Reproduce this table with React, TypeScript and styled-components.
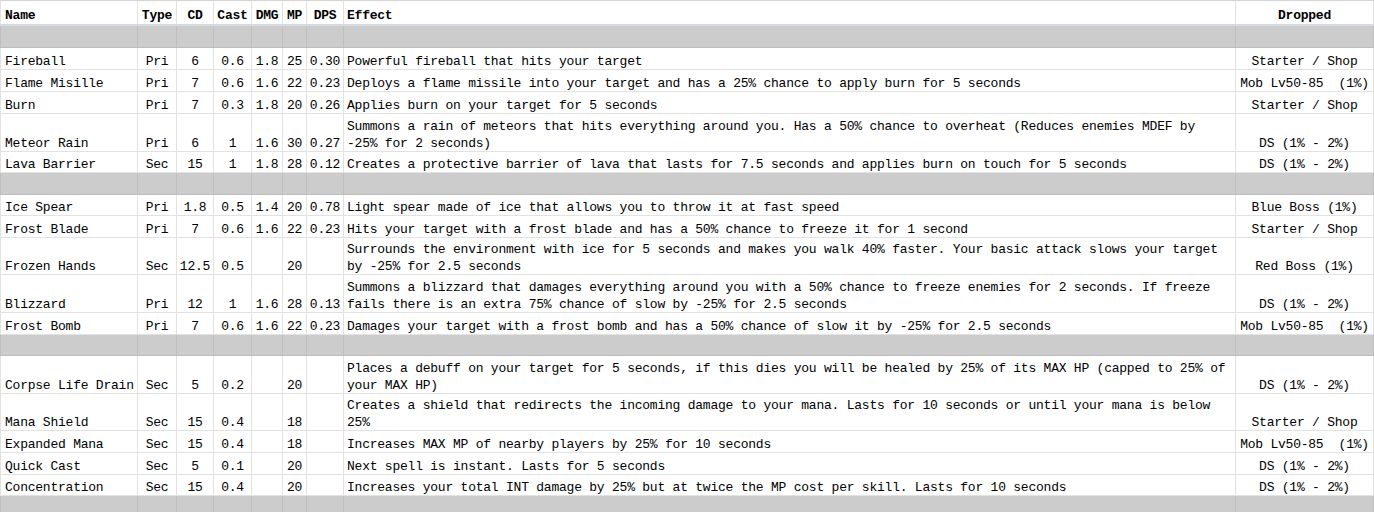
import React from "react";
import styled, { createGlobalStyle } from "styled-components";

const Global = createGlobalStyle`
  html, body { margin: 0; padding: 0; background: #ffffff; }
  body { font-family: "Liberation Mono", "DejaVu Sans Mono", monospace; color: #000; }
`;

const COLS = "138px 39px 37px 38px 31px 24px 37px 892px 138px";

const Sheet = styled.div`
  width: 1374px;
  overflow: hidden;
  border-top: 1px solid #d4d4d4;
  font-size: 13px;
  letter-spacing: -0.23px;
  line-height: 17px;
`;

const Row = styled.div<{ $h: number; $band?: boolean; $head?: boolean }>`
  display: grid;
  grid-template-columns: ${COLS};
  box-sizing: border-box;
  height: ${(p) => p.$h}px;
  background: ${(p) => (p.$band ? "#cccccc" : "#ffffff")};
  border-bottom: ${(p) => (p.$head ? "2px solid #d6dbe1" : p.$band ? "1px solid #bdbdbd" : "1px solid #e2e2e2")};
  font-weight: ${(p) => (p.$head ? 700 : 400)};
`;

const Cell = styled.div<{ $align?: "left" | "center"; $band?: boolean }>`
  display: flex;
  flex-direction: column;
  justify-content: flex-end;
  align-items: ${(p) => (p.$align === "center" ? "center" : "flex-start")};
  box-sizing: border-box;
  padding: 0 ${(p) => (p.$align === "center" ? 0 : 2)}px 0 ${(p) => (p.$align === "center" ? 0 : 3)}px;
  border-right: 1px solid ${(p) => (p.$band ? "#bfbfbf" : "#e2e2e2")};
  white-space: pre;
  overflow: hidden;
  &:first-child {
    border-left: 1px solid ${(p) => (p.$band ? "#bfbfbf" : "#e2e2e2")};
    padding-left: ${(p) => (p.$align === "center" ? 0 : 4)}px;
  }
`;

const Line = styled.span<{ $sink?: number }>`
  display: block;
  &:last-child {
    margin-bottom: ${(p) => -(p.$sink ?? 1)}px;
  }
`;

type Skill = {
  name: string;
  type: string;
  cd: string;
  cast: string;
  dmg: string;
  mp: string;
  dps: string;
  effect: string[];
  drop: string;
  h: number;
};

type Item = Skill | { band: true; h: number };

const data: Item[] = [
  { band: true, h: 22 },
  { name: "Fireball", type: "Pri", cd: "6", cast: "0.6", dmg: "1.8", mp: "25", dps: "0.30", effect: ["Powerful fireball that hits your target"], drop: "Starter / Shop", h: 22 },
  { name: "Flame Misille", type: "Pri", cd: "7", cast: "0.6", dmg: "1.6", mp: "22", dps: "0.23", effect: ["Deploys a flame missile into your target and has a 25% chance to apply burn for 5 seconds"], drop: "Mob Lv50-85  (1%)", h: 22 },
  { name: "Burn", type: "Pri", cd: "7", cast: "0.3", dmg: "1.8", mp: "20", dps: "0.26", effect: ["Applies burn on your target for 5 seconds"], drop: "Starter / Shop", h: 22 },
  { name: "Meteor Rain", type: "Pri", cd: "6", cast: "1", dmg: "1.6", mp: "30", dps: "0.27", effect: ["Summons a rain of meteors that hits everything around you. Has a 50% chance to overheat (Reduces enemies MDEF by", "-25% for 2 seconds)"], drop: "DS (1% - 2%)", h: 38 },
  { name: "Lava Barrier", type: "Sec", cd: "15", cast: "1", dmg: "1.8", mp: "28", dps: "0.12", effect: ["Creates a protective barrier of lava that lasts for 7.5 seconds and applies burn on touch for 5 seconds"], drop: "DS (1% - 2%)", h: 21 },
  { band: true, h: 22 },
  { name: "Ice Spear", type: "Pri", cd: "1.8", cast: "0.5", dmg: "1.4", mp: "20", dps: "0.78", effect: ["Light spear made of ice that allows you to throw it at fast speed"], drop: "Blue Boss (1%)", h: 21 },
  { name: "Frost Blade", type: "Pri", cd: "7", cast: "0.6", dmg: "1.6", mp: "22", dps: "0.23", effect: ["Hits your target with a frost blade and has a 50% chance to freeze it for 1 second"], drop: "Starter / Shop", h: 22 },
  { name: "Frozen Hands", type: "Sec", cd: "12.5", cast: "0.5", dmg: "", mp: "20", dps: "", effect: ["Surrounds the environment with ice for 5 seconds and makes you walk 40% faster. Your basic attack slows your target", "by -25% for 2.5 seconds"], drop: "Red Boss (1%)", h: 37 },
  { name: "Blizzard", type: "Pri", cd: "12", cast: "1", dmg: "1.6", mp: "28", dps: "0.13", effect: ["Summons a blizzard that damages everything around you with a 50% chance to freeze enemies for 2 seconds. If freeze", "fails there is an extra 75% chance of slow by -25% for 2.5 seconds"], drop: "DS (1% - 2%)", h: 38 },
  { name: "Frost Bomb", type: "Pri", cd: "7", cast: "0.6", dmg: "1.6", mp: "22", dps: "0.23", effect: ["Damages your target with a frost bomb and has a 50% chance of slow it by -25% for 2.5 seconds"], drop: "Mob Lv50-85  (1%)", h: 22 },
  { band: true, h: 21 },
  { name: "Corpse Life Drain", type: "Sec", cd: "5", cast: "0.2", dmg: "", mp: "20", dps: "", effect: ["Places a debuff on your target for 5 seconds, if this dies you will be healed by 25% of its MAX HP (capped to 25% of", "your MAX HP)"], drop: "DS (1% - 2%)", h: 38 },
  { name: "Mana Shield", type: "Sec", cd: "15", cast: "0.4", dmg: "", mp: "18", dps: "", effect: ["Creates a shield that redirects the incoming damage to your mana. Lasts for 10 seconds or until your mana is below", "25%"], drop: "Starter / Shop", h: 37 },
  { name: "Expanded Mana", type: "Sec", cd: "15", cast: "0.4", dmg: "", mp: "18", dps: "", effect: ["Increases MAX MP of nearby players by 25% for 10 seconds"], drop: "Mob Lv50-85  (1%)", h: 22 },
  { name: "Quick Cast", type: "Sec", cd: "5", cast: "0.1", dmg: "", mp: "20", dps: "", effect: ["Next spell is instant. Lasts for 5 seconds"], drop: "DS (1% - 2%)", h: 22 },
  { name: "Concentration", type: "Sec", cd: "15", cast: "0.4", dmg: "", mp: "20", dps: "", effect: ["Increases your total INT damage by 25% but at twice the MP cost per skill. Lasts for 10 seconds"], drop: "DS (1% - 2%)", h: 21 },
  { band: true, h: 22 },
];

const headers: { label: string; align: "left" | "center" }[] = [
  { label: "Name", align: "left" },
  { label: "Type", align: "center" },
  { label: "CD", align: "center" },
  { label: "Cast", align: "center" },
  { label: "DMG", align: "center" },
  { label: "MP", align: "center" },
  { label: "DPS", align: "center" },
  { label: "Effect", align: "left" },
  { label: "Dropped", align: "center" },
];

export default function App() {
  return (
    <>
      <Global />
      <Sheet>
        <Row $h={25} $head>
          {headers.map((h) => (
            <Cell key={h.label} $align={h.align}>
              <Line $sink={0}>{h.label}</Line>
            </Cell>
          ))}
        </Row>
        {data.map((item, i) => {
          if ("band" in item) {
            return (
              <Row key={i} $h={item.h} $band>
                {headers.map((h) => (
                  <Cell key={h.label} $band />
                ))}
              </Row>
            );
          }
          const cols: [string, "left" | "center"][] = [
            [item.name, "left"],
            [item.type, "center"],
            [item.cd, "center"],
            [item.cast, "center"],
            [item.dmg, "center"],
            [item.mp, "center"],
            [item.dps, "center"],
          ];
          return (
            <Row key={i} $h={item.h}>
              {cols.map(([v, a], k) => (
                <Cell key={k} $align={a}>
                  <Line>{v}</Line>
                </Cell>
              ))}
              <Cell $align="left">
                {item.effect.map((line, j) => (
                  <Line key={j}>{line}</Line>
                ))}
              </Cell>
              <Cell $align="center">
                <Line>{item.drop}</Line>
              </Cell>
            </Row>
          );
        })}
      </Sheet>
    </>
  );
}
